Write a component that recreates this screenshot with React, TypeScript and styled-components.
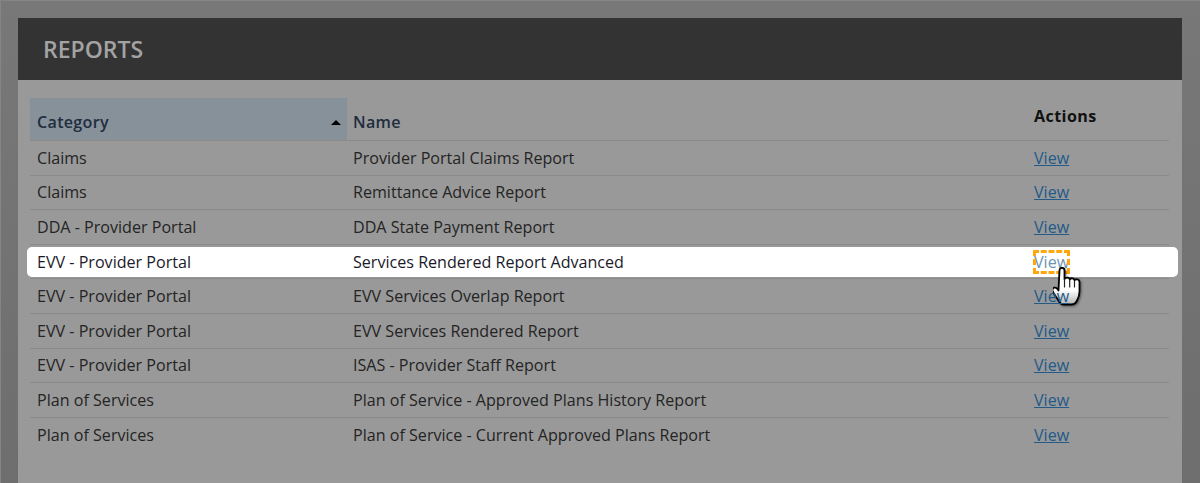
import React, { FC } from 'react';
import styled, { createGlobalStyle } from 'styled-components';

type Report = {
  category: string;
  name: string;
  active?: boolean;
}

const reports: Report[] = [
  { category: 'Claims', name: 'Provider Portal Claims Report' },
  { category: 'Claims', name: 'Remittance Advice Report' },
  { category: 'DDA - Provider Portal', name: 'DDA State Payment Report' },
  { category: 'EVV - Provider Portal', name: 'Services Rendered Report Advanced', active: true },
  { category: 'EVV - Provider Portal', name: 'EVV Services Overlap Report' },
  { category: 'EVV - Provider Portal', name: 'EVV Services Rendered Report' },
  { category: 'EVV - Provider Portal', name: 'ISAS - Provider Staff Report' },
  { category: 'Plan of Services', name: 'Plan of Service - Approved Plans History Report' },
  { category: 'Plan of Services', name: 'Plan of Service - Current Approved Plans Report' },
];

const GlobalStyle = createGlobalStyle`
  html, body {
    margin: 0;
    height: 100%;
    overflow: hidden;
  }

  body {
    font-family: "Open Sans", "Liberation Sans", sans-serif;
    font-size: 16.1px;
    color: #242424;
  }
`;

const Page = styled.div`
  box-sizing: border-box;
  height: 483px;
  padding: 17px 18px 0 17px;
  background: linear-gradient(#787878, #6e6e6e);
  border-top: 1px solid #858585;
  border-left: 1px solid #858585;
`;

const Panel = styled.section`
  height: 100%;
  background: #999999;
`;

const PanelHeader = styled.header`
  display: flex;
  align-items: center;
  height: 62px;
  padding-left: 25px;
  background: #333333;
`;

const Title = styled.h1`
  margin: 0;
  font-size: 23px;
  font-weight: 600;
  color: #a3a3a3;
`;

const Table = styled.div`
  margin: 18px 13px 0 12px;
`;

const columns = 'grid-template-columns: 317px 681px 140px;';

const HeadRow = styled.div`
  display: grid;
  ${columns}
  height: 43px;
  border-bottom: 1px solid #8a8a8a;
  box-sizing: border-box;
`;

const SortedHead = styled.div`
  display: flex;
  align-items: center;
  justify-content: space-between;
  padding: 6px 6px 0 7px;
  background: #87919a;
  font-weight: 600;
  letter-spacing: 0.3px;
  color: #1f2d3f;
`;

const Head = styled.div`
  padding: 13px 6px 0;
  font-weight: 600;
  letter-spacing: 0.3px;
  color: #1f2d3f;
`;

const ActionsHead = styled.div`
  padding: 7px 6px 0;
  font-weight: 700;
  letter-spacing: 0.4px;
  color: #111111;
`;

const SortArrow = styled.span`
  width: 0;
  height: 0;
  border-left: 5px solid transparent;
  border-right: 5px solid transparent;
  border-bottom: 5px solid #000000;
`;

const Row = styled.div<{ $active?: boolean; $last?: boolean }>`
  position: relative;
  display: grid;
  ${columns}
  align-items: center;
  height: 34.6px;
  box-sizing: border-box;
  border-bottom: 1px solid ${(props): string => (props.$last ? 'transparent' : '#8a8a8a')};
  color: ${(props): string => (props.$active ? '#1a1a2a' : '#242424')};

  &::before {
    content: '';
    display: ${(props): string => (props.$active ? 'block' : 'none')};
    position: absolute;
    top: 2px;
    bottom: 1px;
    left: -3px;
    right: -9px;
    background: #ffffff;
    border-radius: 5px;
  }
`;

const Cell = styled.div`
  position: relative;
  padding: 0 6px;
`;

const CategoryCell = styled(Cell)`
  padding-left: 7px;
`;

const ViewLink = styled.a<{ $active?: boolean }>`
  position: relative;
  color: ${(props): string => (props.$active ? '#6d93b3' : '#225a8a')};
  text-decoration: ${(props): string => (props.$active ? 'none' : 'underline')};
  outline: ${(props): string => (props.$active ? '3px dashed #ffa70f' : 'none')};
  outline-offset: -2px;
`;

const Cursor = styled.svg`
  position: absolute;
  left: 25px;
  top: 16px;
  width: 29px;
  height: 41px;
  filter: drop-shadow(1px 1px 1px rgba(0, 0, 0, 0.45));
`;

const HandCursor: FC = () => (
  <Cursor viewBox="0 0 29 41">
    <defs>
      <linearGradient id="hand" x1="0" y1="0" x2="0" y2="1">
        <stop offset="0.6" stopColor="#ffffff" />
        <stop offset="1" stopColor="#b4b4b4" />
      </linearGradient>
    </defs>
    <path
      d="M6.5 3.5c0-3.5 5-3.5 5 0v8.5c1-2 5-2 5.2 .5c1-2 4.700-1.500 4.800 .8c1-1.800 5-1 5 1.700v9.500c0 5-1.500 7-3 10c-1 2-2 3-5 3h-8c-3 0-4-2-5-4c-1.500-3-5-6-6-10c-.5-3 3-4 5-1.500l1 1.500z"
      fill="url(#hand)"
      stroke="#000000"
      strokeWidth="1.8"
      strokeLinejoin="round"
    />
    <path d="M11.500 12v8M16.700 13v7M21.500 14v6" stroke="#222222" strokeWidth="1.200" strokeLinecap="round" />
  </Cursor>
);

const App: FC = () => (
  <>
    <GlobalStyle />
    <Page>
      <Panel>
        <PanelHeader>
          <Title>REPORTS</Title>
        </PanelHeader>
        <Table>
          <HeadRow>
            <SortedHead>
              Category
              <SortArrow />
            </SortedHead>
            <Head>Name</Head>
            <ActionsHead>Actions</ActionsHead>
          </HeadRow>
          {reports.map((report, index) => (
            <Row
              key={report.name}
              $active={report.active}
              $last={index === reports.length - 1}
            >
              <CategoryCell>{report.category}</CategoryCell>
              <Cell>{report.name}</Cell>
              <Cell>
                <ViewLink href="#" $active={report.active}>View</ViewLink>
                {report.active && <HandCursor />}
              </Cell>
            </Row>
          ))}
        </Table>
      </Panel>
    </Page>
  </>
);

export default App;
